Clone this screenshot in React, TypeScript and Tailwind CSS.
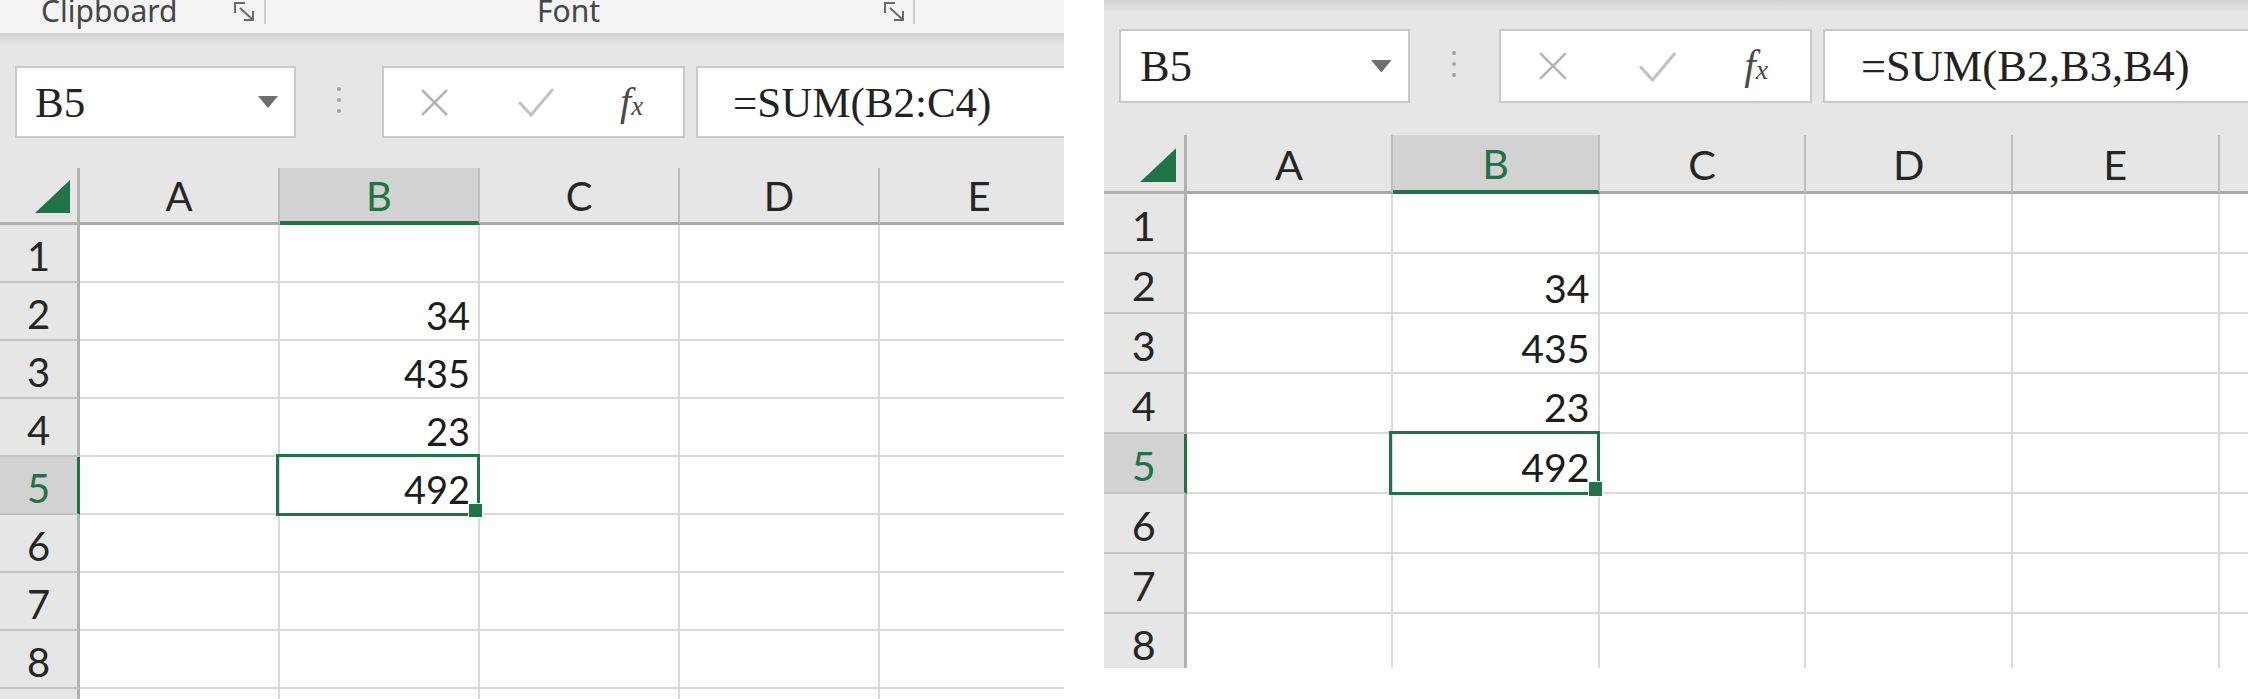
import React from 'react';

const COLS = ['A', 'B', 'C', 'D', 'E', 'F'];
const VALUES: Record<number, string> = { 2: '34', 3: '435', 4: '23', 5: '492' };
const ACTIVE_ROW = 5;
const ACTIVE_COL = 'B';

const Launcher: React.FC = () => (
  <svg width="24" height="22" viewBox="0 0 24 22" fill="none" stroke="#6a6a6a" strokeWidth="2" className="mt-[1px] shrink-0">
    <path d="M2 12V2h10" />
    <path d="M7 7l12 11" />
    <path d="M20 10v9h-9" />
  </svg>
);

const Ribbon: React.FC = () => (
  <div className="flex h-[33px] shrink-0 items-start overflow-hidden bg-[#f3f3f3] font-['Noto_Sans',sans-serif] text-[30px] leading-none text-[#454545]">
    <span className="-mt-[4px] ml-[41px] w-[192px] shrink-0">Clipboard</span>
    <Launcher />
    <div className="ml-[7px] h-[24px] w-[2px] shrink-0 bg-[#cfcfcf]" />
    <span className="-mt-[4px] ml-[271px] w-[346px] shrink-0">Font</span>
    <Launcher />
    <div className="ml-[6px] h-[24px] w-[2px] shrink-0 bg-[#cfcfcf]" />
  </div>
);

interface FormulaBarProps {
  formula: string;
  ribbon: boolean;
}

const FormulaBar: React.FC<FormulaBarProps> = ({ formula, ribbon }) => (
  <div
    className={`flex shrink-0 items-start bg-[#e6e6e6] bg-[linear-gradient(to_bottom,#d3d3d3,#e6e6e6_12px)] ${
      ribbon ? 'h-[135px] pt-[33px]' : 'h-[131px] pt-[28px]'
    }`}
  >
    {/* Name box */}
    <div className="ml-[15px] flex h-[72px] w-[281px] shrink-0 items-center justify-between border-2 border-[#c8c8c8] bg-white pl-[18px] pr-[16px]">
      <span className="font-['Liberation_Serif',serif] text-[43px] leading-none text-[#222]">B5</span>
      <svg width="20" height="12" viewBox="0 0 20 12">
        <path d="M0 0H20L10 12Z" fill="#6e6e6e" />
      </svg>
    </div>

    {/* Grip dots */}
    <div className="flex h-[72px] w-[86px] shrink-0 flex-col items-center justify-center gap-[7px] pb-[4px]">
      <div className="h-[4px] w-[4px] rounded-full bg-[#a3a3a3]" />
      <div className="h-[4px] w-[4px] rounded-full bg-[#a3a3a3]" />
      <div className="h-[4px] w-[4px] rounded-full bg-[#a3a3a3]" />
    </div>

    {/* Cancel / enter / insert function */}
    <div className="flex h-[72px] w-[303px] shrink-0 items-center border-2 border-[#c8c8c8] bg-white pl-[35px]">
      <svg width="31" height="29" viewBox="0 0 31 29" fill="none" stroke="#b4b4b4" strokeWidth="2.5" className="shrink-0">
        <path d="M3 2L28 27M28 2L3 27" />
      </svg>
      <svg width="38" height="30" viewBox="0 0 38 30" fill="none" stroke="#c2c2c2" strokeWidth="3" className="ml-[67px] shrink-0">
        <path d="M2 15L14 28L36 2" />
      </svg>
      <span className="ml-[65px] flex items-baseline font-['Liberation_Serif',serif] italic leading-none text-[#4a4a4a]">
        <span className="text-[40px]">f</span>
        <span className="text-[27px]">x</span>
      </span>
    </div>

    {/* Formula input */}
    <div className="-mr-[20px] ml-[11px] flex h-[72px] flex-1 items-center border-2 border-[#c8c8c8] bg-white pl-[35px]">
      <span className="whitespace-nowrap font-['Liberation_Serif',serif] text-[43px] leading-none text-[#222]">{formula}</span>
    </div>
  </div>
);

const Grid: React.FC<{ rows: number }> = ({ rows }) => (
  <div className="flex flex-col font-['Lato',sans-serif]">
    {/* Column headers */}
    <div className="flex h-[57px] shrink-0">
      <div className="flex w-[80px] shrink-0 items-end justify-end border-b-[3px] border-r-[3px] border-[#b1b1b1] bg-[#e6e6e6] pb-[9px] pr-[7px]">
        <svg width="35" height="33" viewBox="0 0 35 33">
          <path d="M35 0V33H0Z" fill="#217346" />
        </svg>
      </div>
      {COLS.map((c) => (
        <div
          key={c}
          className={`flex w-[200px] shrink-0 items-center justify-center border-r-2 pt-[2px] text-[40px] leading-none ${
            c === ACTIVE_COL
              ? 'border-r-[#bdbdbd] border-b-[4px] border-b-[#217346] bg-[#d2d2d2] text-[#217346]'
              : 'border-r-[#bdbdbd] border-b-[3px] border-b-[#a9a9a9] bg-[#e6e6e6] text-[#262626]'
          }`}
        >
          {c}
        </div>
      ))}
    </div>

    {/* Rows */}
    {Array.from({ length: rows }, (_, i) => i + 1).map((r) => (
      <div key={r} className="flex h-[58px] shrink-0">
        <div
          className={`flex w-[80px] shrink-0 items-center justify-center border-b-2 border-r-[3px] border-b-[#c2c2c2] pt-[5px] text-[40px] leading-none ${
            r === ACTIVE_ROW
              ? 'border-r-[#217346] bg-[#d2d2d2] text-[#217346]'
              : 'border-r-[#b1b1b1] bg-[#e6e6e6] text-[#262626]'
          }`}
        >
          {r}
        </div>
        {COLS.map((c) => {
          const value = c === 'B' ? VALUES[r] : undefined;
          const active = c === ACTIVE_COL && r === ACTIVE_ROW;
          return (
            <div
              key={c}
              className="relative flex w-[200px] shrink-0 items-end justify-end border-b-2 border-r-2 border-[#dadada] bg-white pb-[5px] pr-[8px] text-[38px] leading-none text-[#1c1c1c]"
            >
              {value}
              {active && (
                <div className="absolute -bottom-[3px] -left-[4px] -right-[2px] -top-[3px] z-10 border-[3px] border-[#217346]">
                  <div className="absolute -bottom-[5px] -right-[6px] h-[15px] w-[15px] border border-white bg-[#217346]" />
                </div>
              )}
            </div>
          );
        })}
      </div>
    ))}
  </div>
);

interface SheetProps {
  formula: string;
  ribbon: boolean;
  rows: number;
  className: string;
}

const Sheet: React.FC<SheetProps> = ({ formula, ribbon, rows, className }) => (
  <div className={`flex shrink-0 flex-col overflow-hidden bg-white ${className}`}>
    {ribbon && <Ribbon />}
    <FormulaBar formula={formula} ribbon={ribbon} />
    <Grid rows={rows} />
  </div>
);

const App: React.FC = () => (
  <div className="flex h-[699px] w-[2248px] items-start overflow-hidden bg-white">
    <Sheet formula="=SUM(B2:C4)" ribbon rows={9} className="h-[699px] w-[1064px]" />
    <div className="w-[40px] shrink-0" />
    <Sheet formula="=SUM(B2,B3,B4)" ribbon={false} rows={8} className="h-[647px] w-[1108px] [zoom:1.033]" />
  </div>
);

export default App;
